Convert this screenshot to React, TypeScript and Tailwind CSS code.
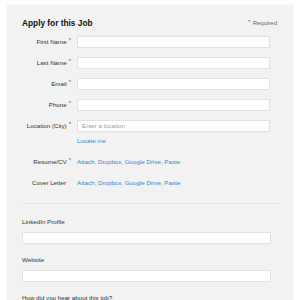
const font = { fontFamily: '"Liberation Sans", Arial, sans-serif' }

function Req() {
  return <span className="ml-[2px] -translate-y-[2px] text-[6px] leading-none text-[#e02020]">*</span>
}

function Row({ label, required, children }: { label: string; required?: boolean; children: React.ReactNode }) {
  return (
    <div className="flex h-[12px] items-center">
      <div className="flex w-[55px] shrink-0 items-center justify-end pr-[6px] text-[6.2px] text-[#333]">
        <span className="whitespace-nowrap">{label}</span>
        {required ? <Req /> : <span className="ml-[2px] w-[3px]" />}
      </div>
      {children}
    </div>
  )
}

function Field({ placeholder }: { placeholder?: string }) {
  return (
    <div className="flex h-[12px] w-[193px] items-center border border-[#e2e2e2] bg-white pl-[4px] text-[6.2px] text-[#9a9a9a]">
      {placeholder}
    </div>
  )
}

const links = 'Attach, Dropbox, Google Drive, Paste'

export default function App() {
  return (
    <div className="h-[300px] w-[300px] overflow-hidden bg-white" style={font}>
      <div className="ml-[7px] mt-[5px] h-[320px] w-[285px] bg-[#f2f2f2] px-[15px] pt-[12px] shadow-[1px_0_2px_rgba(0,0,0,0.08)]">
        <div className="flex h-[12px] items-center justify-between">
          <h1 className="text-[8.3px] font-bold text-[#111]">Apply for this Job</h1>
          <span className="flex items-center text-[6px] text-[#666]">
            <span className="mr-[2px] -translate-y-[1px] text-[#e02020]">*</span>Required
          </span>
        </div>

        <div className="mt-[7px] flex flex-col gap-[9px]">
          <Row label="First Name" required><Field /></Row>
          <Row label="Last Name" required><Field /></Row>
          <Row label="Email" required><Field /></Row>
          <Row label="Phone" required><Field /></Row>
          <Row label="Location (City)" required><Field placeholder="Enter a location" /></Row>
        </div>
        <div className="ml-[55px] mt-[5px] h-[8px] text-[6.2px] leading-[8px] text-[#3a86d4]">Locate me</div>

        <div className="mt-[11px] flex flex-col gap-[9px]">
          <Row label="Resume/CV" required>
            <span className="whitespace-nowrap text-[6.2px] text-[#3a86d4]">{links}</span>
          </Row>
          <Row label="Cover Letter">
            <span className="whitespace-nowrap text-[6.2px] text-[#3a86d4]">{links}</span>
          </Row>
        </div>

        <div className="mt-[14px] h-px w-[256px] bg-[#e2e2e2]" />

        <div className="mt-[14px] h-[8px] text-[6.2px] leading-[8px] text-[#333]">LinkedIn Profile</div>
        <div className="mt-[6px] h-[12px] w-[249px] border border-[#e2e2e2] bg-white" />
        <div className="mt-[12px] h-[8px] text-[6.2px] leading-[8px] text-[#333]">Website</div>
        <div className="mt-[6px] h-[12px] w-[249px] border border-[#e2e2e2] bg-white" />
        <div className="mt-[12px] h-[8px] text-[6.2px] leading-[8px] text-[#333]">How did you hear about this job?</div>
      </div>
    </div>
  )
}
